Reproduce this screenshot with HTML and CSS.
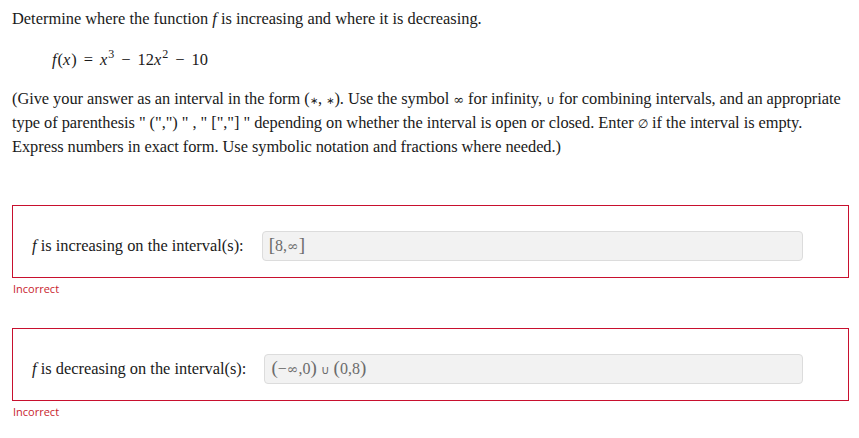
FILE: index.html
```html
<!DOCTYPE html>
<html lang="en">
<head>
  <meta charset="UTF-8" />
  <title>Increasing and decreasing intervals</title>
  <link rel="stylesheet" href="styles.css">
</head>
<body>
  <main class="question">
    <p class="prompt">Determine where the function <i>f</i> is increasing and where it is decreasing.</p>

    <p class="formula"><i>f</i>(<i>x</i>)<span class="op">=</span><i>x</i><sup>3</sup><span class="op">&minus;</span>12<i>x</i><sup>2</sup><span class="op">&minus;</span>10</p>

    <p class="hint">(Give your answer as an interval in the form (<span class="ast">&lowast;</span>, <span class="ast">&lowast;</span>). Use the symbol <span class="inf">&infin;</span> for infinity, <span class="cup">&cup;</span> for combining intervals, and an appropriate type of parenthesis " (",") " , " [","] " depending on whether the interval is open or closed. Enter <span class="empty">&empty;</span> if the interval is empty. Express numbers in exact form. Use symbolic notation and fractions where needed.)</p>

    <div class="answer">
      <div class="answer-row">
        <label><i>f</i> is increasing on the interval(s):</label>
        <div class="answer-field"><span class="br">[</span>8,<span class="inf">&infin;</span><span class="br">]</span></div>
      </div>
    </div>
    <div class="feedback">Incorrect</div>

    <div class="answer">
      <div class="answer-row">
        <label><i>f</i> is decreasing on the interval(s):</label>
        <div class="answer-field"><span class="br">(</span>&minus;<span class="inf">&infin;</span>,0<span class="br">)</span> <span class="cup">&cup;</span> <span class="br">(</span>0,8<span class="br">)</span></div>
      </div>
    </div>
    <div class="feedback">Incorrect</div>
  </main>
</body>
</html>
```

FILE: styles.css
```css
:root {
  --text-color: #1a1a1a;
  --wrong-color: #c8102e;
  --field-bg: #f2f2f2;
  --field-border: #dcdcdc;
}

* {
  margin: 0;
  padding: 0;
  box-sizing: border-box;
}

body {
  background-color: white;
  color: var(--text-color);
  font-family: 'Liberation Serif', 'Times New Roman', serif;
  font-size: 16.4px;
  line-height: 24px;
}

.question {
  padding: 7px 10px 0 12px;
}

.formula {
  margin: 17px 0 15px 40px;
}

.formula i {
  padding-right: 1px;
}

.formula .op {
  padding: 0 7px;
}

.formula sup {
  font-size: 12px;
  line-height: 1;
  vertical-align: 7px;
}

.hint {
  letter-spacing: -0.05px;
}

.ast,
.inf,
.cup,
.empty {
  line-height: 1;
}

.ast {
  font-family: 'DejaVu Sans', sans-serif;
  font-size: 10px;
}

.inf {
  font-family: 'DejaVu Serif', serif;
  font-size: 13px;
}

.cup {
  font-family: 'DejaVu Sans', sans-serif;
  font-size: 12px;
}

.empty {
  font-family: 'DejaVu Sans', sans-serif;
  font-size: 12px;
  font-style: italic;
}

.answer {
  margin-top: 46px;
  border: 1px solid var(--wrong-color);
  padding: 25px 45px 16px 19px;
}

.answer-row {
  display: flex;
  align-items: center;
  gap: 18px;
}

.answer-row label {
  white-space: nowrap;
}

.answer-field {
  flex: 1;
  height: 30px;
  background-color: var(--field-bg);
  border: 1px solid var(--field-border);
  border-radius: 4px;
  padding: 2px 6px;
  color: #6b6b6b;
  font-size: 16px;
  line-height: 24px;
}

.answer-field .br {
  font-size: 19px;
  line-height: 1;
}

.answer-field .inf {
  font-size: 14px;
}

.feedback {
  margin-top: 3px;
  color: #c81e2e;
  font-family: 'Open Sans', sans-serif;
  font-size: 11px;
  line-height: 16px;
  padding-left: 1px;
}

.feedback + .answer {
  margin-top: 31px;
}
```
